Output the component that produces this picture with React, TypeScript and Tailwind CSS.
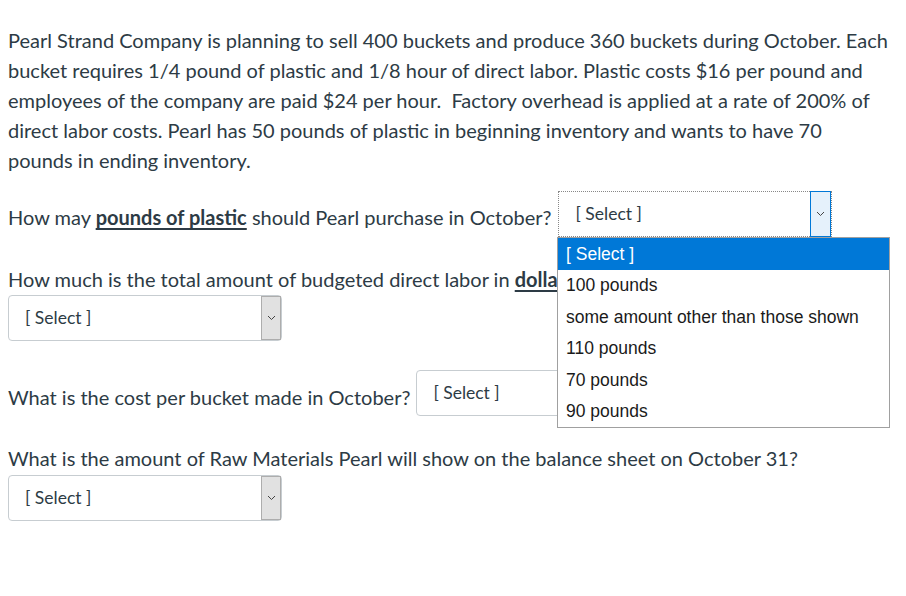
import React from 'react';

function Chevron() {
  return (
    <svg width="9" height="6" viewBox="0 0 9 6" fill="none">
      <path d="M1 1l3.5 3.5L8 1" stroke="#444" strokeWidth="1" />
    </svg>
  );
}

function FakeSelect({ focused = false }: { focused?: boolean }) {
  if (focused) {
    return (
      <div className="flex h-[46px] w-[274px] shrink-0 items-stretch border border-dotted border-[#888] bg-white">
        <div className="flex flex-1 items-center pl-[17px] text-[17.5px] text-[#2d3b45]">[ Select ]</div>
        <div className="my-[-1px] flex w-[21px] items-center justify-center border border-[#0078d7] bg-[#e5f1fb]">
          <Chevron />
        </div>
      </div>
    );
  }
  return (
    <div className="flex h-[46px] w-[274px] shrink-0 items-stretch rounded-[4px] border border-[#c7cdd1] bg-white">
      <div className="flex flex-1 items-center pl-[16px] text-[17.5px] text-[#2d3b45]">[ Select ]</div>
      <div className="flex w-[20px] items-center justify-center border border-[#adadad] bg-[#e1e1e1]">
        <Chevron />
      </div>
    </div>
  );
}

const options = ['[ Select ]', '100 pounds', 'some amount other than those shown', '110 pounds', '70 pounds', '90 pounds'];

export default function App() {
  return (
    <div className="relative h-[596px] w-[906px] overflow-hidden bg-white pl-[8px] pt-[25px] font-['Lato',sans-serif] text-[20px] text-[#2d3b45]">
      <p className="w-[890px] leading-[30px]">
        Pearl Strand Company is planning to sell 400 buckets and produce 360 buckets during October. Each bucket requires 1/4 pound of plastic and 1/8 hour of direct labor. Plastic costs $16 per pound and employees of the company are paid $24 per hour.&nbsp; Factory overhead is applied at a rate of 200% of direct labor costs. Pearl has 50 pounds of plastic in beginning inventory and wants to have 70
        <br />
        pounds in ending inventory.
      </p>

      <div className="mt-[16px] flex items-center gap-[6px] whitespace-nowrap">
        <span className="pt-[6px]">
          How may <span className="font-bold underline underline-offset-[3px]">pounds of plastic</span> should Pearl purchase in October?
        </span>
        <FakeSelect focused />
      </div>

      <div className="mt-[27px] w-[549px] overflow-hidden whitespace-nowrap leading-[30px]">
        How much is the total amount of budgeted direct labor in{' '}
        <span className="font-bold underline underline-offset-[3px]">dollars</span> for October?
      </div>
      <div className="mt-[1px]">
        <FakeSelect />
      </div>

      <div className="mt-[29px] flex items-center gap-[6px] whitespace-nowrap">
        <span className="pt-[8px]">What is the cost per bucket made in October?</span>
        <FakeSelect />
      </div>

      <div className="mt-[27px] whitespace-nowrap leading-[30px]">
        What is the amount of Raw Materials Pearl will show on the balance sheet on October 31?
      </div>
      <div className="mt-[2px]">
        <FakeSelect />
      </div>

      <div className="absolute left-[557px] top-[237px] z-10 w-[333px] border border-[#a0a0a0] bg-white font-['Liberation_Sans',sans-serif] text-[17.5px] text-[#1a1a1a]">
        {options.map((o, i) => (
          <div
            key={o}
            className={
              i === 0
                ? 'flex h-[31.5px] items-center bg-[#0078d7] pl-[8px] text-white'
                : 'flex h-[31.5px] items-center pl-[8px]'
            }
          >
            {o}
          </div>
        ))}
      </div>
    </div>
  );
}
